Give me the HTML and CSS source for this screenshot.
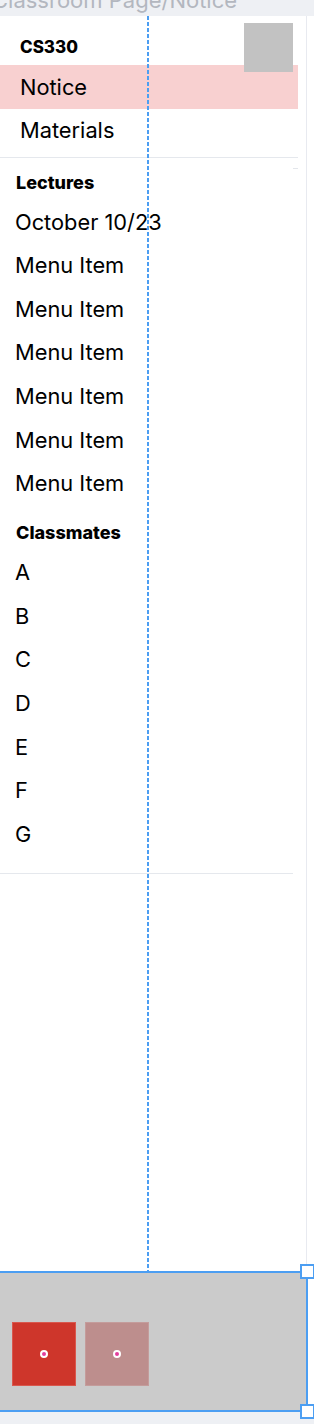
FILE: index.html
```html
<!DOCTYPE html>
<html>
<head>
<meta charset="utf-8">
<link rel="stylesheet" href="styles.css">
</head>
<body>
<div class="titlebar"><span class="title-text">Classroom Page/Notice</span></div>
<div class="frame">
  <div class="guide"></div>
  <div class="thumb"></div>
  <div class="course">CS330</div>
  <div class="nav-item active">Notice</div>
  <div class="nav-item">Materials</div>
  <div class="divider wide"></div>
  <div class="mark"></div>
  <div class="section-head first">Lectures</div>
  <div class="list">
    <div class="item">October 10/23</div>
    <div class="item">Menu Item</div>
    <div class="item">Menu Item</div>
    <div class="item">Menu Item</div>
    <div class="item">Menu Item</div>
    <div class="item">Menu Item</div>
    <div class="item">Menu Item</div>
  </div>
  <div class="section-head second">Classmates</div>
  <div class="list classmates">
    <div class="item">A</div>
    <div class="item">B</div>
    <div class="item">C</div>
    <div class="item">D</div>
    <div class="item">E</div>
    <div class="item">F</div>
    <div class="item">G</div>
  </div>
  <div class="divider narrow"></div>
</div>
<div class="selection">
  <div class="swatch red"><span class="dot"></span></div>
  <div class="swatch rose"><span class="dot"></span></div>
  <span class="handle top"></span>
  <span class="handle bottom"></span>
</div>
<div class="footer"></div>
</body>
</html>
```

FILE: styles.css
```css
* { box-sizing: border-box; }
html, body { margin: 0; padding: 0; }
body {
  background: #ffffff;
  font-family: Inter, "Noto Sans", sans-serif;
  color: #000;
  width: 314px;
  overflow: hidden;
}
.titlebar {
  height: 16px;
  background: #eef0f4;
  overflow: hidden;
  white-space: nowrap;
}
.title-text {
  display: block;
  margin-top: -13px;
  margin-left: -8px;
  font-size: 22px;
  line-height: 26px;
  color: #b3b7bf;
}
.frame {
  position: relative;
  width: 307px;
  height: 1255px;
  border-right: 1px solid #e8eaf0;
  background: #fff;
}
.guide {
  position: absolute;
  left: 147px;
  top: 0;
  bottom: 0;
  width: 2px;
  background: repeating-linear-gradient(to bottom, #4c9ef2 0, #4c9ef2 4px, transparent 4px, transparent 6px);
  z-index: 2;
}
.thumb {
  position: absolute;
  left: 244px;
  top: 7px;
  width: 49px;
  height: 49px;
  background: #c2c2c2;
  z-index: 1;
}
.course {
  padding: 22px 0 9px 20px;
  font-weight: 800;
  font-size: 17px;
  line-height: 18px;
}
.nav-item {
  width: 298px;
  height: 43.6px;
  display: flex;
  align-items: center;
  padding-left: 20px;
  font-size: 21.8px;
}
.nav-item.active { background: #f8d0d0; }
.divider { height: 1px; background: #e5e8ed; }
.divider.wide { width: 298px; margin-top: 5px; }
.divider.narrow { width: 293px; margin-top: 17.6px; }
.mark {
  width: 5px;
  height: 1px;
  margin: 10px 0 0 293px;
  background: #e3e6eb;
}
.section-head {
  height: 20px;
  line-height: 20px;
  padding-left: 16px;
  font-weight: 800;
  font-size: 18px;
}
.section-head.first { margin-top: 4px; }
.section-head.second { margin-top: 17.8px; }
.list { margin-top: 6.7px; }
.list.classmates { margin-top: 7.5px; }
.item {
  height: 43.6px;
  display: flex;
  align-items: center;
  padding-left: 15px;
  font-size: 21.8px;
}
.selection {
  position: relative;
  margin-left: -2px;
  width: 310px;
  height: 141px;
  background: #cbcbcb;
  border: 2px solid #4c9ef2;
  display: flex;
  align-items: flex-start;
  gap: 8.5px;
  padding: 49px 0 0 12px;
}
.swatch {
  width: 64px;
  height: 64px;
  display: flex;
  align-items: center;
  justify-content: center;
}
.swatch.red { background: #ce362b; border: 1px solid #d9574d; }
.swatch.rose { background: #bd8e8d; border: 1px solid #c49c9b; }
.dot {
  width: 8px;
  height: 8px;
  border-radius: 50%;
  background: #e23e9c;
  border: 2px solid #fff;
}
.handle {
  position: absolute;
  right: -9px;
  width: 15px;
  height: 15px;
  background: #fff;
  border: 2px solid #4c9ef2;
}
.handle.top { top: -9px; }
.handle.bottom { bottom: -9px; }
.footer {
  height: 12px;
  background: #eef0f4;
}
```
